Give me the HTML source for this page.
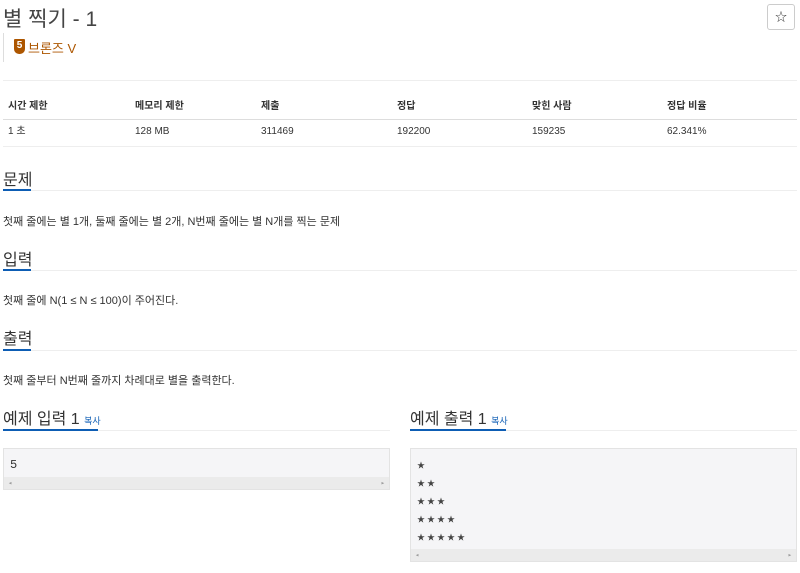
<!DOCTYPE html><html><head><meta charset="utf-8"><style>
body{margin:0;width:800px;height:573px;background:#fff;font-family:"Liberation Sans","Noto Sans CJK KR",sans-serif;color:#333;position:relative;overflow:hidden}
.a{position:absolute;white-space:nowrap}
.h{font-size:16px;color:#333}
.sm{font-size:10px;line-height:12px}
.t{font-size:11px;color:#333}
.ul{position:absolute;height:1px;background:#eee}
.bl{position:absolute;height:2px;background:#0d5db4}
.pre{position:absolute;background:#f5f5f7;border:1px solid #e3e3e3;font-family:"Liberation Mono","Noto Sans CJK KR",monospace;font-size:11px;color:#333}
.sb{position:absolute;left:0;right:0;bottom:0;height:12px;background:#ebebeb;font-size:7px;color:#999}
</style></head><body>
<div class="a" style="left:3px;top:3px;font-size:21px;color:#444">별 찍기 - 1</div>
<div class="a" style="left:767px;top:4px;width:26px;height:24px;border:1px solid #ccc;border-radius:3px;text-align:center;line-height:24px;font-size:12px">☆</div>
<div class="a" style="left:3px;top:33px;width:1px;height:29px;background:#ddd"></div>
<div class="a" style="left:14px;top:39px;width:11px;height:15px;background:#ad5600;border-radius:1px 1px 5px 5px;color:#fff;font-size:10px;font-weight:bold;text-align:center;line-height:14px">5</div>
<div class="a" style="left:28px;top:38px;font-size:13px;color:#ad5600">브론즈 V</div>
<div class="ul" style="left:3px;width:794px;top:80px"></div>
<div class="a sm" style="left:8px;top:101px;font-weight:bold">시간 제한</div>
<div class="a sm" style="left:135px;top:101px;font-weight:bold">메모리 제한</div>
<div class="a sm" style="left:261px;top:101px;font-weight:bold">제출</div>
<div class="a sm" style="left:397px;top:101px;font-weight:bold">정답</div>
<div class="a sm" style="left:532px;top:101px;font-weight:bold">맞힌 사람</div>
<div class="a sm" style="left:667px;top:101px;font-weight:bold">정답 비율</div>
<div class="ul" style="left:3px;width:794px;top:119px;background:#ddd"></div>
<div class="a sm" style="left:8px;top:126px">1 초</div>
<div class="a sm" style="left:135px;top:126px">128 MB</div>
<div class="a sm" style="left:261px;top:126px">311469</div>
<div class="a sm" style="left:397px;top:126px">192200</div>
<div class="a sm" style="left:532px;top:126px">159235</div>
<div class="a sm" style="left:667px;top:126px">62.341%</div>
<div class="ul" style="left:3px;width:794px;top:146px"></div>

<div class="a h" style="left:3px;top:166px">문제</div>
<div class="ul" style="left:3px;width:794px;top:190px"></div><div class="bl" style="left:3px;width:28px;top:189px"></div>
<div class="a t" style="left:3px;top:213px">첫째 줄에는 별 1개, 둘째 줄에는 별 2개, N번째 줄에는 별 N개를 찍는 문제</div>
<div class="a h" style="left:3px;top:246px">입력</div>
<div class="ul" style="left:3px;width:794px;top:270px"></div><div class="bl" style="left:3px;width:28px;top:269px"></div>
<div class="a t" style="left:3px;top:292px">첫째 줄에 N(1 ≤ N ≤ 100)이 주어진다.</div>
<div class="a h" style="left:3px;top:325px">출력</div>
<div class="ul" style="left:3px;width:794px;top:350px"></div><div class="bl" style="left:3px;width:28px;top:349px"></div>
<div class="a t" style="left:3px;top:372px">첫째 줄부터 N번째 줄까지 차례대로 별을 출력한다.</div>

<div class="a h" style="left:3px;top:405px">예제 입력 1 <span style="font-size:9px;color:#0d5db4">복사</span></div>
<div class="ul" style="left:3px;width:387px;top:430px"></div><div class="bl" style="left:3px;width:95px;top:429px"></div>
<div class="a h" style="left:410px;top:405px">예제 출력 1 <span style="font-size:9px;color:#0d5db4">복사</span></div>
<div class="ul" style="left:410px;width:387px;top:430px"></div><div class="bl" style="left:410px;width:96px;top:429px"></div>

<div class="pre" style="left:3px;top:448px;width:385px;height:40px"><div style="position:absolute;left:6px;top:9px;font-size:12px">5</div><div class="sb"><span style="position:absolute;left:4px;top:2px">◂</span><span style="position:absolute;right:4px;top:2px">▸</span></div></div>
<div class="pre" style="left:410px;top:448px;width:385px;height:112px"><div style="position:absolute;left:6px;top:9px;line-height:18px;font-size:8px;letter-spacing:2px;color:#444">★<br>★★<br>★★★<br>★★★★<br>★★★★★</div><div class="sb"><span style="position:absolute;left:4px;top:2px">◂</span><span style="position:absolute;right:4px;top:2px">▸</span></div></div>
</body></html>
